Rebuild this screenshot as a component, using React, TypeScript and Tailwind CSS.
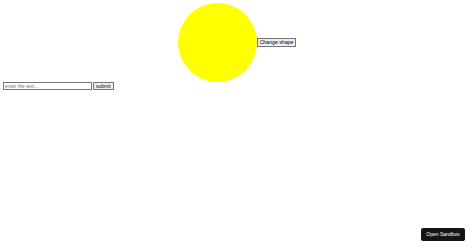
export default function App() {
  return (
    <div className="relative h-[248px] w-[474px] bg-white font-['Liberation_Sans',Arial,sans-serif]">
      <div className="flex items-center justify-center pt-[3px]">
        <div className="h-[79px] w-[79px] rounded-full bg-[#ffff00]" />
        <button className="h-[9px] border border-[#767676] bg-[#efefef] px-[2px] text-[5.2px] leading-[7px] text-black">
          Change shape
        </button>
      </div>
      <div className="flex items-center pl-[3px]">
        <input
          placeholder="enter the text..."
          className="h-[8px] w-[89px] border border-[#767676] px-[1px] text-[5px] leading-[6px] placeholder:text-[#757575]"
        />
        <button className="ml-[1px] h-[8px] border border-[#767676] bg-[#efefef] px-[2px] text-[5px] leading-[6px] text-black">
          submit
        </button>
      </div>
      <button className="absolute bottom-[7px] right-[9px] h-[13px] w-[44px] rounded-[2px] bg-[#151515] text-[5px] text-white">
        Open Sandbox
      </button>
    </div>
  );
}
